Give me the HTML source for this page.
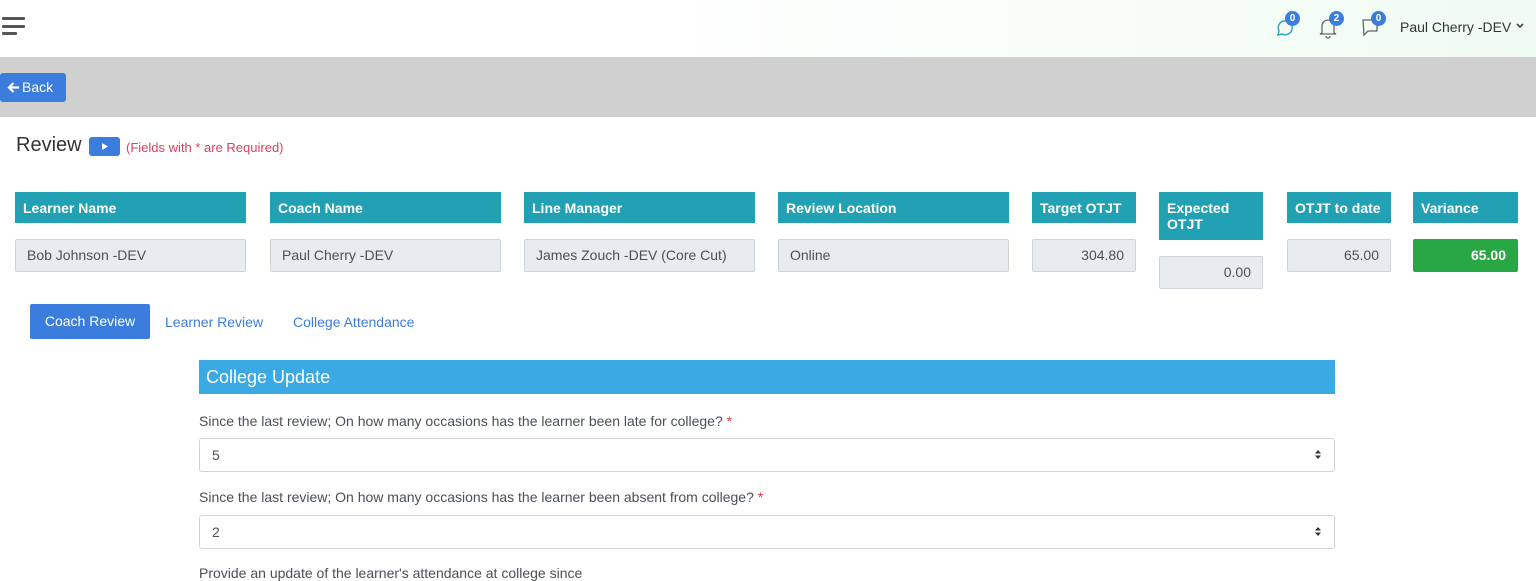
<!DOCTYPE html>
<html><head><style>
*{box-sizing:border-box;margin:0;padding:0}
body{width:1536px;height:570px;overflow:hidden;font-family:"Liberation Sans",sans-serif;background:#fff;position:relative;color:#495057}
.abs{position:absolute}
.top{left:0;top:0;width:1536px;height:57px;background:linear-gradient(90deg,#fff 0%,#fff 40%,#f0fbf3 100%)}
.band{left:0;top:57px;width:1536px;height:60px;background:#d0d0d0}
.hd{background:#22a1b4;color:#fff;font-size:14px;font-weight:bold;padding:8px 8px;line-height:16px}
.in{background:#e9ecef;border:1px solid #ced4da;border-radius:2px;font-size:14px;color:#495057;padding:0 11px;line-height:31px;height:33px}
.badge{width:15px;height:15px;border-radius:50%;background:#3b7ddd;color:#fff;font-size:10px;text-align:center;line-height:15px;font-weight:bold}
.lbl{font-size:14px;color:#495057}
.sel{left:199px;width:1136px;height:34px;border:1px solid #ced4da;border-radius:3px;font-size:14px;padding-left:12px;line-height:32px;color:#495057}
</style></head><body>
<div class="abs top"></div>
<div class="abs" style="left:2px;top:17px;width:23px;height:3px;background:#555;border-radius:1px"></div>
<div class="abs" style="left:2px;top:25px;width:23px;height:3px;background:#555;border-radius:1px"></div>
<div class="abs" style="left:2px;top:32px;width:15px;height:3px;background:#555;border-radius:1px"></div>
<svg class="abs" style="left:1274px;top:17px" width="22" height="22" viewBox="0 0 22 22"><path d="M4 18 L5 14 A7 7 0 1 1 8 17 Z" fill="none" stroke="#2aa0b5" stroke-width="1.4"/></svg>
<div class="abs badge" style="left:1285px;top:11px">0</div>
<svg class="abs" style="left:1318px;top:16px" width="20" height="24" viewBox="0 0 20 24"><path d="M4 17 L4 10 A6 6 0 0 1 16 10 L16 17 L18 18 L2 18 Z" fill="none" stroke="#666" stroke-width="1.3"/><path d="M8 20 A2 2 0 0 0 12 20" fill="none" stroke="#666" stroke-width="1.3"/></svg>
<div class="abs badge" style="left:1329px;top:11px">2</div>
<svg class="abs" style="left:1361px;top:17px" width="22" height="22" viewBox="0 0 22 22"><path d="M2 3 H16 V14 H7 L3 18 Z" fill="none" stroke="#666" stroke-width="1.3"/></svg>
<div class="abs badge" style="left:1371px;top:11px">0</div>
<div class="abs" style="left:1400px;top:19px;font-size:14px;color:#333">Paul Cherry -DEV</div>
<svg class="abs" style="left:1516px;top:23px" width="8" height="6"><path d="M1 1 L4 4 L7 1" fill="none" stroke="#333" stroke-width="1.5"/></svg>
<div class="abs band"></div>
<div class="abs" style="left:0;top:73px;width:66px;height:29px;background:#3b7ddd;border-radius:3px;color:#fff;font-size:14px;line-height:29px;padding-left:22px">Back</div>
<svg class="abs" style="left:7px;top:81px" width="13" height="13" viewBox="0 0 13 13"><path d="M12 6.5 H2 M6.5 2 L2 6.5 L6.5 11" fill="none" stroke="#fff" stroke-width="2.2"/></svg>
<div class="abs" style="left:16px;top:134px;font-size:20px;color:#333">Review</div>
<div class="abs" style="left:89px;top:137px;width:31px;height:19px;background:#3b7ddd;border-radius:3px"><svg width="31" height="19"><path d="M13 6 L19 9.5 L13 13 Z" fill="#fff"/></svg></div>
<div class="abs" style="left:126px;top:140px;font-size:13px;color:#d9435e">(Fields with * are Required)</div>

<div class="abs hd" style="left:15px;top:192px;width:231px;height:31px">Learner Name</div>
<div class="abs hd" style="left:270px;top:192px;width:231px;height:31px">Coach Name</div>
<div class="abs hd" style="left:524px;top:192px;width:231px;height:31px">Line Manager</div>
<div class="abs hd" style="left:778px;top:192px;width:231px;height:31px">Review Location</div>
<div class="abs hd" style="left:1032px;top:192px;width:104px;height:31px">Target OTJT</div>
<div class="abs hd" style="left:1159px;top:192px;width:104px;height:48px">Expected OTJT</div>
<div class="abs hd" style="left:1287px;top:192px;width:104px;height:31px">OTJT to date</div>
<div class="abs hd" style="left:1413px;top:192px;width:105px;height:31px">Variance</div>

<div class="abs in" style="left:15px;top:239px;width:231px">Bob Johnson -DEV</div>
<div class="abs in" style="left:270px;top:239px;width:231px">Paul Cherry -DEV</div>
<div class="abs in" style="left:524px;top:239px;width:231px">James Zouch -DEV (Core Cut)</div>
<div class="abs in" style="left:778px;top:239px;width:231px">Online</div>
<div class="abs in" style="left:1032px;top:239px;width:104px;text-align:right">304.80</div>
<div class="abs in" style="left:1159px;top:256px;width:104px;text-align:right">0.00</div>
<div class="abs in" style="left:1287px;top:239px;width:104px;text-align:right">65.00</div>
<div class="abs in" style="left:1413px;top:239px;width:105px;text-align:right;background:#28a745;border-color:#28a745;color:#fff;font-weight:bold">65.00</div>

<div class="abs" style="left:30px;top:304px;width:120px;height:35px;background:#3b7ddd;border-radius:2px;color:#fff;font-size:14px;text-align:center;line-height:35px">Coach Review</div>
<div class="abs" style="left:165px;top:314px;font-size:14px;color:#3b7ddd">Learner Review</div>
<div class="abs" style="left:293px;top:314px;font-size:14px;color:#3b7ddd">College Attendance</div>

<div class="abs" style="left:199px;top:360px;width:1136px;height:34px;background:#3ba9e4;color:#fff;font-size:18px;line-height:34px;padding-left:7px">College Update</div>
<div class="abs lbl" style="left:199px;top:413px">Since the last review; On how many occasions has the learner been late for college? <span style="color:#dc3545">*</span></div>
<div class="abs sel" style="top:438px">5</div>
<svg class="abs" style="left:1314px;top:449px" width="8" height="11"><path d="M1 4.5 L4 1 L7 4.5 Z M1 6.5 L4 10 L7 6.5 Z" fill="#333"/></svg>
<div class="abs lbl" style="left:199px;top:489px">Since the last review; On how many occasions has the learner been absent from college? <span style="color:#dc3545">*</span></div>
<div class="abs sel" style="top:515px">2</div>
<svg class="abs" style="left:1314px;top:526px" width="8" height="11"><path d="M1 4.5 L4 1 L7 4.5 Z M1 6.5 L4 10 L7 6.5 Z" fill="#333"/></svg>
<div class="abs lbl" style="left:199px;top:565px">Provide an update of the learner's attendance at college since</div>
</body></html>
